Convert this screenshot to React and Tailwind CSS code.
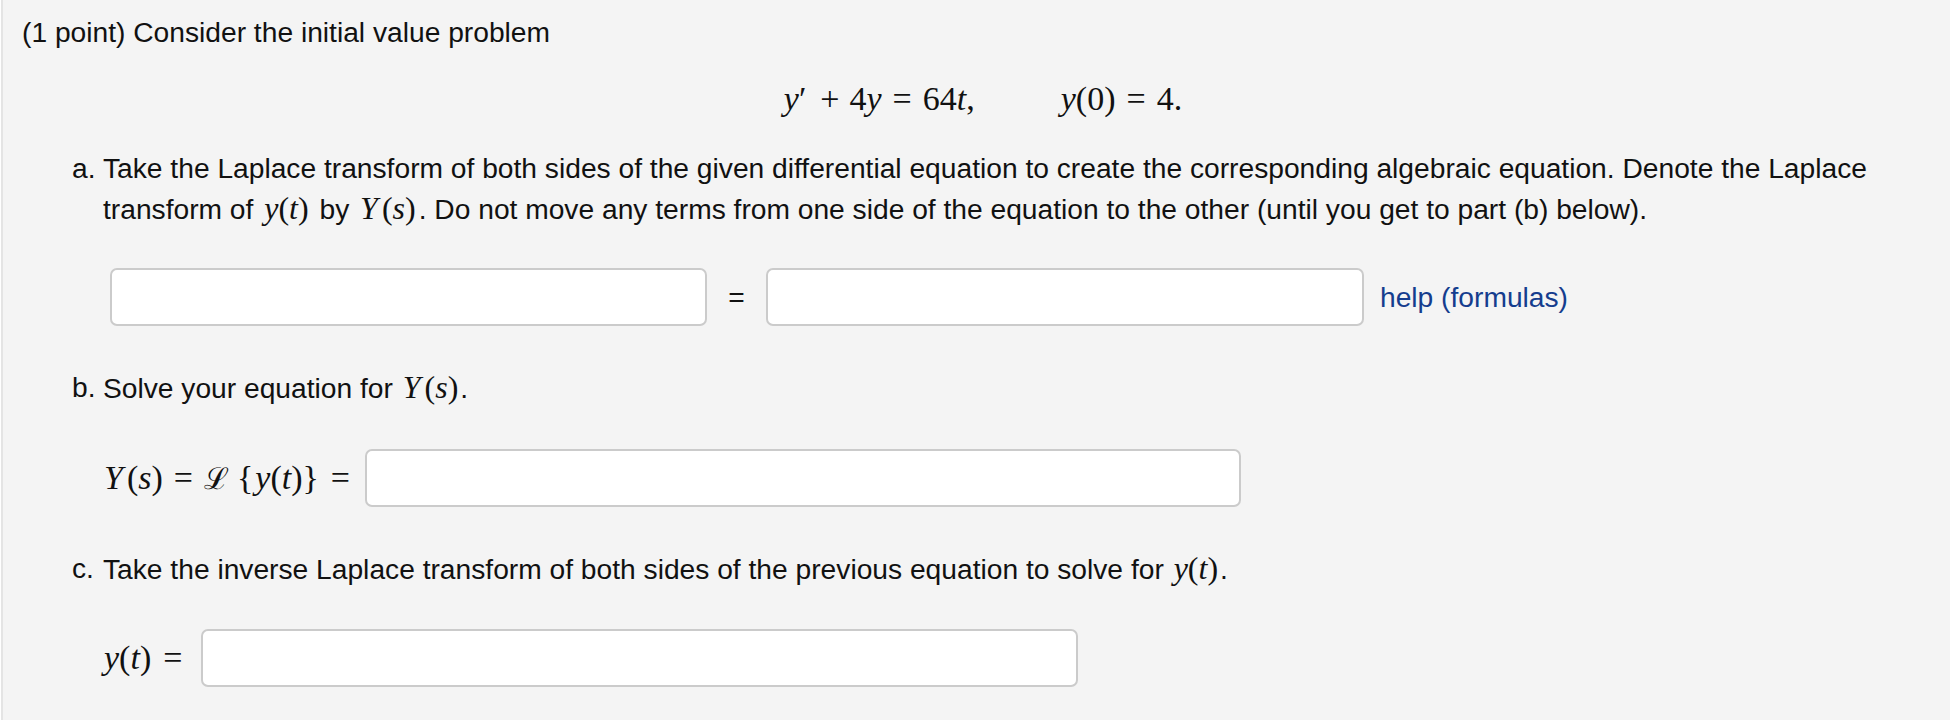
import React from 'react';

// italic math variable
function V({ children, className = '' }) {
  return <span className={`italic ${className}`}>{children}</span>;
}

function M({ children, className = '' }) {
  return (
    <span className={`font-['Liberation_Serif','Times_New_Roman',serif] ${className}`}>
      {children}
    </span>
  );
}

function Eq() {
  return <span className="mx-[11px]">=</span>;
}

function AnswerBox({ className = '' }) {
  return (
    <input
      type="text"
      className={`h-[58px] rounded-[7px] border-2 border-[#cbcbcb] bg-white px-3 outline-none ${className}`}
    />
  );
}

export default function App() {
  return (
    <div className="min-h-[720px] w-full bg-white pl-px">
      <div className="min-h-[720px] border-l-2 border-[#e4e4e4] bg-[#f4f4f4] pl-[19px] pr-[48px] pt-[12px] font-['Liberation_Sans',Arial,sans-serif] text-[28.2px] leading-[40px] text-[#111]">
        {/* Header */}
        <p>(1 point) Consider the initial value problem</p>

        {/* Problem equation */}
        <div className="mt-[27px] flex justify-center pl-[42px] font-['Liberation_Serif','Times_New_Roman',serif] text-[34px] leading-[40px]">
          <span>
            <V>y</V>′<span className="ml-[14px] mr-[10px]">+</span>4<V>y</V>
            <Eq />64<V>t</V>,
          </span>
          <span className="ml-[86px]">
            <V>y</V>(0)<Eq />4.
          </span>
        </div>

        {/* Part a */}
        <div className="mt-[29px] flex pl-[50px]">
          <span className="w-[31px] shrink-0">a.</span>
          <p>
            Take the Laplace transform of both sides of the given differential equation to create the
            corresponding algebraic equation. Denote the Laplace transform of{' '}
            <M className="mx-[3px] text-[32px]">
              <V>y</V>(<V>t</V>)
            </M>{' '}
            by{' '}
            <M className="mx-[3px] text-[32px]">
              <V className="mr-[4px]">Y</V>(<V>s</V>)
            </M>
            . Do not move any terms from one side of the equation to the other (until you get to part (b)
            below).
          </p>
        </div>

        <div className="mt-[39px] flex items-center pl-[88px]">
          <AnswerBox className="w-[597px]" />
          <span className="w-[59px] text-center">=</span>
          <AnswerBox className="w-[598px]" />
          <a href="#" className="ml-[16px] text-[#153d8e]">
            help (formulas)
          </a>
        </div>

        {/* Part b */}
        <div className="mt-[41px] flex pl-[50px]">
          <span className="w-[31px] shrink-0">b.</span>
          <p>
            Solve your equation for{' '}
            <M className="mx-[2px] text-[32px]">
              <V className="mr-[4px]">Y</V>(<V>s</V>)
            </M>
            .
          </p>
        </div>

        <div className="mt-[41px] flex items-center pl-[82px]">
          <M className="mr-[15px] text-[34px]">
            <V className="mr-[4px]">Y</V>(<V>s</V>)<Eq />
            <span className="font-['DejaVu_Serif',serif] text-[30px]">ℒ</span>
            <span className="ml-[8px]">{'{'}</span>
            <V className="ml-[2px]">y</V>(<V>t</V>)<span>{'}'}</span>
            <span className="ml-[12px]">=</span>
          </M>
          <AnswerBox className="w-[876px]" />
        </div>

        {/* Part c */}
        <div className="mt-[41px] flex pl-[50px]">
          <span className="w-[31px] shrink-0">c.</span>
          <p>
            Take the inverse Laplace transform of both sides of the previous equation to solve for{' '}
            <M className="mx-[2px] text-[32px]">
              <V>y</V>(<V>t</V>)
            </M>
            .
          </p>
        </div>

        <div className="mt-[40px] flex items-center pl-[82px]">
          <M className="mr-[19px] text-[34px]">
            <V>y</V>(<V>t</V>)<span className="ml-[12px]">=</span>
          </M>
          <AnswerBox className="w-[877px]" />
        </div>
      </div>
    </div>
  );
}
